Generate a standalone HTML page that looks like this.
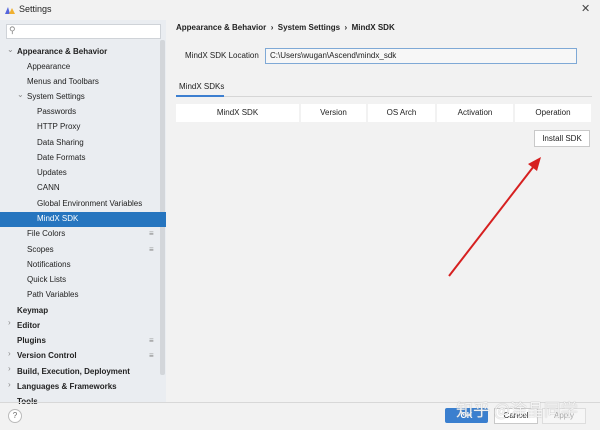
<html><head><style>
body{margin:0;width:600px;height:430px;overflow:hidden;background:#f2f2f2;font-family:"Liberation Sans",sans-serif;font-size:8px;color:#222;position:relative}
.a{position:absolute;white-space:nowrap}
.side{position:absolute;left:0;top:20px;width:166px;height:382px;background:#eaedf1;overflow:hidden}
.r{position:absolute;height:15px;line-height:15px;font-size:8px;white-space:nowrap}
.b{font-weight:bold}
.ch{position:absolute;font-size:8px;color:#888}
.th{position:absolute;top:104px;height:18px;line-height:18px;background:#fff;text-align:center;font-size:8px}
</style></head><body>
<div class="a" style="left:0;top:0;width:600px;height:20px;background:#f2f2f2"></div>
<svg class="a" style="left:4px;top:5px" width="12" height="10"><path d="M1 9L4 2L6 9Z" fill="#5566dd"/><path d="M5 9L8 3L11 9Z" fill="#f0b030"/></svg>
<div class="a" style="left:19px;top:4px;font-size:9px">Settings</div>
<div class="a" style="left:581px;top:2px;font-size:11px;color:#444">✕</div>
<div class="side">
<div class="a" style="left:6px;top:4px;width:153px;height:13px;background:#fff;border:1px solid #cfd3d8"></div>
<div class="a" style="left:9px;top:5px;font-size:9px;color:#888">⚲</div>
<div class="a" style="left:160px;top:20px;width:5px;height:335px;background:#d3d6da;border-radius:2px"></div>
<div class="a" style="left:0;top:192px;width:166px;height:15px;background:#2675bf"></div>
</div>
<div style="position:absolute;left:0;top:20px">
<div class="ch" style="left:7px;top:25px">⌄</div><div class="r b" style="left:17px;top:24px">Appearance &amp; Behavior</div>
<div class="r" style="left:27px;top:39px">Appearance</div>
<div class="r" style="left:27px;top:54px">Menus and Toolbars</div>
<div class="ch" style="left:17px;top:70px">⌄</div><div class="r" style="left:27px;top:69px">System Settings</div>
<div class="r" style="left:37px;top:84px">Passwords</div>
<div class="r" style="left:37px;top:99px">HTTP Proxy</div>
<div class="r" style="left:37px;top:115px">Data Sharing</div>
<div class="r" style="left:37px;top:130px">Date Formats</div>
<div class="r" style="left:37px;top:145px">Updates</div>
<div class="r" style="left:37px;top:160px">CANN</div>
<div class="r" style="left:37px;top:176px">Global Environment Variables</div>
<div class="r" style="left:37px;top:191px;color:#fff">MindX SDK</div>
<div class="r" style="left:27px;top:206px">File Colors</div><div class="ch" style="left:149px;top:209px">≡</div>
<div class="r" style="left:27px;top:222px">Scopes</div><div class="ch" style="left:149px;top:225px">≡</div>
<div class="r" style="left:27px;top:237px">Notifications</div>
<div class="r" style="left:27px;top:252px">Quick Lists</div>
<div class="r" style="left:27px;top:267px">Path Variables</div>
<div class="r b" style="left:17px;top:283px">Keymap</div>
<div class="ch" style="left:8px;top:298px">›</div><div class="r b" style="left:17px;top:298px">Editor</div>
<div class="r b" style="left:17px;top:313px">Plugins</div><div class="ch" style="left:149px;top:316px">≡</div>
<div class="ch" style="left:8px;top:329px">›</div><div class="r b" style="left:17px;top:328px">Version Control</div><div class="ch" style="left:149px;top:331px">≡</div>
<div class="ch" style="left:8px;top:344px">›</div><div class="r b" style="left:17px;top:344px">Build, Execution, Deployment</div>
<div class="ch" style="left:8px;top:360px">›</div><div class="r b" style="left:17px;top:359px">Languages &amp; Frameworks</div>
<div class="r b" style="left:17px;top:374px">Tools</div>
</div>
<div class="a b" style="left:176px;top:23px;font-size:8px">Appearance &amp; Behavior &nbsp;›&nbsp; System Settings &nbsp;›&nbsp; MindX SDK</div>
<div class="a" style="left:185px;top:51px">MindX SDK Location</div>
<div class="a" style="left:265px;top:48px;width:310px;height:14px;background:#f7f7f7;border:1px solid #7fa9d6;line-height:14px;padding-left:4px;box-sizing:border-box;width:312px;height:16px">C:\Users\wugan\Ascend\mindx_sdk</div>
<div class="a" style="left:179px;top:82px">MindX SDKs</div>
<div class="a" style="left:176px;top:95px;width:22px;height:2px;background:#3d7fd0;width:48px"></div>
<div class="a" style="left:224px;top:96px;width:368px;height:1px;background:#d6d6d6"></div>
<div class="th" style="left:176px;width:123px">MindX SDK</div>
<div class="th" style="left:301px;width:65px">Version</div>
<div class="th" style="left:368px;width:67px">OS Arch</div>
<div class="th" style="left:437px;width:76px">Activation</div>
<div class="th" style="left:515px;width:76px">Operation</div>
<div class="a" style="left:534px;top:130px;width:54px;height:15px;background:#fff;border:1px solid #c9c9c9;text-align:center;line-height:15px">Install SDK</div>
<svg class="a" style="left:0;top:0" width="600" height="430"><line x1="449" y1="276" x2="534" y2="166" stroke="#d62020" stroke-width="2"/><path d="M541 157L528 164L537 171Z" fill="#d62020"/></svg>
<div class="a" style="left:0;top:402px;width:600px;height:1px;background:#d8d8d8"></div>
<div class="a" style="left:8px;top:409px;width:12px;height:12px;border:1px solid #bbb;border-radius:50%;background:#fff;text-align:center;line-height:12px;font-size:8px;color:#666">?</div>
<div class="a" style="left:445px;top:408px;width:43px;height:15px;background:#3a7fcf;border-radius:2px;color:#fff;text-align:center;line-height:15px;font-weight:bold">OK</div>
<div class="a" style="left:494px;top:408px;width:42px;height:14px;background:#fff;border:1px solid #c9c9c9;text-align:center;line-height:14px">Cancel</div>
<div class="a" style="left:542px;top:408px;width:42px;height:14px;background:#f6f6f6;border:1px solid #ddd;text-align:center;line-height:14px;color:#aaa">Apply</div>
<div class="a" style="left:456px;top:396px;font-size:17px;color:rgba(255,255,255,.85);font-family:'Noto Sans CJK SC',sans-serif;text-shadow:0 0 1px #999">知乎 @涂晶同学</div>
</body></html>
